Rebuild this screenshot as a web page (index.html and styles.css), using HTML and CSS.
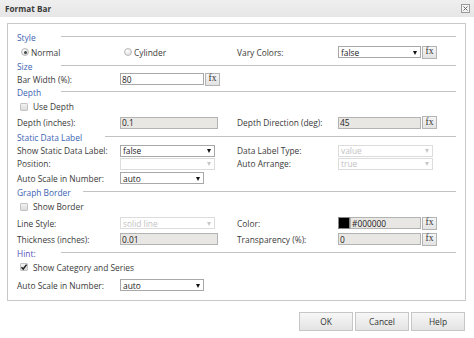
FILE: index.html
```html
<!DOCTYPE html>
<html>
<head>
<meta charset="utf-8">
<title>Format Bar</title>
<link rel="stylesheet" href="styles.css">
</head>
<body>
<div class="dialog">
  <div class="titlebar">
    <span class="title">Format Bar</span>
    <svg class="close" width="9" height="9" viewBox="0 0 9 9"><rect x="0.5" y="0.5" width="8" height="8" fill="#f4f4f4" stroke="#9a9a9a"/><path d="M2.5 2.5 L6.5 6.5 M6.5 2.5 L2.5 6.5" stroke="#6a6a6a" stroke-width="1"/></svg>
  </div>

  <div class="panel">
    <div class="sec r13"><span class="sec-label">Style</span><span class="sec-line"></span></div>
    <div class="row r16">
      <label class="opt"><span class="radio on"></span>Normal</label>
      <label class="opt"><span class="radio"></span>Cylinder</label>
      <span class="lbl">Vary Colors:</span>
      <div class="ctl"><div class="select w83">false<span class="arr"></span></div><span class="fx">fx</span></div>
    </div>

    <div class="sec r12"><span class="sec-label">Size</span><span class="sec-line"></span></div>
    <div class="row r14">
      <span class="lbl">Bar Width (%):</span>
      <div class="ctl"><div class="input w84">80</div><span class="fx">fx</span></div>
    </div>

    <div class="sec r13"><span class="sec-label">Depth</span><span class="sec-line"></span></div>
    <div class="row r15">
      <label class="opt span2"><span class="check"></span>Use Depth</label>
    </div>
    <div class="row r17">
      <span class="lbl">Depth (inches):</span>
      <div class="ctl"><div class="input ro w98">0.1</div></div>
      <span class="lbl">Depth Direction (deg):</span>
      <div class="ctl"><div class="input ro w83">45</div><span class="fx">fx</span></div>
    </div>

    <div class="sec r13"><span class="sec-label wide">Static Data Label</span><span class="sec-line"></span></div>
    <div class="row r13">
      <span class="lbl">Show Static Data Label:</span>
      <div class="ctl"><div class="select w95">false<span class="arr"></span></div></div>
      <span class="lbl">Data Label Type:</span>
      <div class="ctl"><div class="select dis w95">value<span class="arr"></span></div></div>
    </div>
    <div class="row r13">
      <span class="lbl">Position:</span>
      <div class="ctl"><div class="select dis w95"><span class="arr"></span></div></div>
      <span class="lbl">Auto Arrange:</span>
      <div class="ctl"><div class="select dis w95">true<span class="arr"></span></div></div>
    </div>
    <div class="row r16">
      <span class="lbl">Auto Scale in Number:</span>
      <div class="ctl"><div class="select w84">auto<span class="arr"></span></div></div>
    </div>

    <div class="sec r12"><span class="sec-label mid">Graph Border</span><span class="sec-line"></span></div>
    <div class="row r17">
      <label class="opt span2"><span class="check"></span>Show Border</label>
    </div>
    <div class="row r16">
      <span class="lbl">Line Style:</span>
      <div class="ctl"><div class="select dis w95">solid line<span class="arr"></span></div></div>
      <span class="lbl">Color:</span>
      <div class="ctl"><span class="swatch"></span><div class="input ro w71">#000000</div><span class="fx">fx</span></div>
    </div>
    <div class="row r16">
      <span class="lbl">Thickness (inches):</span>
      <div class="ctl"><div class="input ro w98">0.01</div></div>
      <span class="lbl">Transparency (%):</span>
      <div class="ctl"><div class="input ro w83">0</div><span class="fx">fx</span></div>
    </div>

    <div class="sec r12"><span class="sec-label hint">Hint:</span><span class="sec-line"></span></div>
    <div class="row r16">
      <label class="opt span3"><span class="check on"><svg width="8" height="8" viewBox="0 0 8 8"><path d="M1.5 4.2 L3.2 6 L6.6 1.6" fill="none" stroke="#222" stroke-width="1.5"/></svg></span>Show Category and Series</label>
    </div>
    <div class="row r20">
      <span class="lbl">Auto Scale in Number:</span>
      <div class="ctl"><div class="select w84">auto<span class="arr"></span></div></div>
    </div>
  </div>

  <div class="buttons">
    <button class="btn">OK</button>
    <button class="btn">Cancel</button>
    <button class="btn">Help</button>
  </div>
</div>
</body>
</html>
```

FILE: styles.css
```css
html, body {
  margin: 0;
  padding: 0;
  background: #ffffff;
}
body {
  font-family: "Open Sans", "Liberation Sans", sans-serif;
  font-size: 8.4px;
  color: #3a3a3a;
  width: 474px;
  height: 338px;
  overflow: hidden;
}
.dialog {
  width: 474px;
  height: 338px;
}
.titlebar {
  height: 17px;
  background: linear-gradient(#efefef, #e6e6e6);
  display: flex;
  align-items: center;
  justify-content: space-between;
  padding: 0 4px 0 5px;
  box-sizing: border-box;
}
.title {
  font-weight: bold;
  font-size: 8.2px;
  color: #3a3a3a;
}
.close {
  display: block;
  margin-top: -1px;
}
.panel {
  margin: 6px 0 0 7px;
  width: 459px;
  box-sizing: border-box;
  border: 1px solid #c9c9c9;
  padding: 7px 9px 5px 9px;
  background: #ffffff;
}
.row {
  display: grid;
  grid-template-columns: 103px 117px 101px 1fr;
  align-items: center;
}
.sec {
  display: flex;
  align-items: center;
}
.r12 { height: 12px; }
.r13 { height: 13px; }
.r14 { height: 14px; }
.r15 { height: 15px; }
.r16 { height: 16px; }
.r17 { height: 17px; }
.r20 { height: 20px; }

.sec-label {
  width: 44px;
  flex: none;
  color: #3d63b3;
  white-space: nowrap;
}
.sec-label.wide { width: 88px; }
.sec-label.mid { width: 66px; }
.sec-label.hint { color: #5353bb; }
.sec-line {
  flex: 1;
  height: 0;
  border-top: 1px solid #c2c2c2;
  margin-top: -2px;
}
.lbl {
  white-space: nowrap;
}
.opt {
  display: flex;
  align-items: center;
  white-space: nowrap;
}
.span2 { grid-column: span 2; }
.span3 { grid-column: span 3; }
.radio {
  width: 8px;
  height: 8px;
  border-radius: 50%;
  box-sizing: border-box;
  border: 1px solid #b9b9b9;
  background: radial-gradient(circle at 40% 35%, #ffffff, #d6d6d6);
  margin: 0 2px 0 4px;
  position: relative;
}
.radio.on::after {
  content: "";
  position: absolute;
  left: 1.5px;
  top: 1.5px;
  width: 3px;
  height: 3px;
  border-radius: 50%;
  background: #444;
}
.check {
  width: 8px;
  height: 8px;
  box-sizing: border-box;
  border: 1px solid #c3c3c3;
  border-radius: 1px;
  background: linear-gradient(#f2f2f2, #dcdcdc);
  margin: 0 5px 0 3px;
  position: relative;
}
.check svg {
  position: absolute;
  left: -1px;
  top: -1px;
}
.ctl {
  display: flex;
  align-items: center;
}
.select, .input {
  height: 12px;
  box-sizing: border-box;
  border: 1px solid #a8a8a8;
  background: #ffffff;
  display: flex;
  align-items: center;
  padding-left: 2px;
  color: #222;
  position: relative;
  white-space: nowrap;
}
.input { padding-left: 1px; }
.input.ro {
  background: #e9e7e4;
  border-color: #b3b3b3;
}
.select.dis {
  border-color: #dcdcdc;
  color: #c2c2c2;
}
.arr {
  position: absolute;
  right: 3px;
  top: 3.5px;
  width: 0;
  height: 0;
  border-left: 2.5px solid transparent;
  border-right: 2.5px solid transparent;
  border-top: 4px solid #111;
}
.select.dis .arr { border-top-color: #c8c8c8; }
.w71 { width: 71px; }
.w83 { width: 83px; }
.w84 { width: 84px; }
.w95 { width: 95px; }
.w98 { width: 98px; }
.swatch {
  width: 12px;
  height: 12px;
  box-sizing: border-box;
  border: 1px solid #888;
  background: #000;
}
.fx {
  width: 15px;
  height: 13px;
  box-sizing: border-box;
  margin-left: 1px;
  border: 1px solid #b4b4b4;
  background: linear-gradient(#f6f6f6, #e2e2e2);
  font-family: "Liberation Serif", serif;
  font-size: 9.5px;
  color: #333;
  display: flex;
  align-items: center;
  justify-content: center;
  line-height: 1;
}
.buttons {
  display: flex;
  justify-content: flex-end;
  gap: 2px;
  margin-top: 11px;
  padding-right: 9px;
}
.btn {
  width: 54px;
  height: 19px;
  box-sizing: border-box;
  border: 1px solid #c6c6c6;
  background: linear-gradient(#f7f7f7, #e3e3e3);
  font-family: "Open Sans", "Liberation Sans", sans-serif;
  font-size: 8.4px;
  color: #333;
  padding: 0;
  border-radius: 0;
}
```
